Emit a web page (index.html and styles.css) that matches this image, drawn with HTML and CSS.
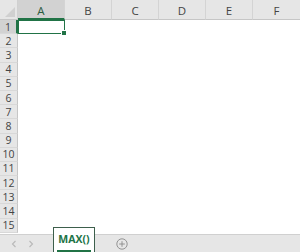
FILE: index.html
```html
<!DOCTYPE html>
<html lang="en">
<head>
    <meta charset="UTF-8">
    <title>Sheet</title>
    <link rel="stylesheet" href="styles.css">
</head>
<body>
    <div class="sheet">
        <div class="grid" id="grid">
            <div class="corner"><span class="tri"></span></div>
            <div class="colhead active">A</div>
            <div class="colhead">B</div>
            <div class="colhead">C</div>
            <div class="colhead">D</div>
            <div class="colhead">E</div>
            <div class="colhead last">F</div>
        </div>
        <div class="tabbar">
            <div class="nav">
                <svg width="6" height="8" viewBox="0 0 6 8"><path d="M4.5 1 L1.5 4 L4.5 7" fill="none" stroke="#b8b8b8" stroke-width="1.1"/></svg>
                <svg width="6" height="8" viewBox="0 0 6 8"><path d="M1.5 1 L4.5 4 L1.5 7" fill="none" stroke="#b8b8b8" stroke-width="1.1"/></svg>
            </div>
            <div class="tab">MAX()</div>
            <div class="add">
                <svg width="12" height="12" viewBox="0 0 12 12"><circle cx="6" cy="6" r="5.2" fill="none" stroke="#8a8a8a" stroke-width="0.9"/><path d="M6 3.2 V8.8 M3.2 6 H8.8" stroke="#8a8a8a" stroke-width="0.9"/></svg>
            </div>
        </div>
    </div>

    <script>
        const grid = document.getElementById('grid');
        for (let r = 1; r <= 15; r++) {
            const head = document.createElement('div');
            head.className = r === 1 ? 'rowhead active' : 'rowhead';
            head.textContent = r;
            grid.appendChild(head);
            for (let c = 0; c < 6; c++) {
                const cell = document.createElement('div');
                cell.className = (r === 1 && c === 0) ? 'cell selected' : 'cell';
                if (r === 1 && c === 0) {
                    const h = document.createElement('span');
                    h.className = 'handle';
                    cell.appendChild(h);
                }
                grid.appendChild(cell);
            }
        }
    </script>
</body>
</html>
```

FILE: styles.css
```css
body {
    margin: 0;
    background-color: #ffffff;
    font-family: "Open Sans", "Noto Sans", sans-serif;
}
.sheet {
    width: 300px;
    height: 252px;
    display: flex;
    flex-direction: column;
    overflow: hidden;
}
.grid {
    display: grid;
    grid-template-columns: 18px repeat(6, 47px);
    grid-template-rows: 20px repeat(15, 14.2px);
}
.corner {
    background-color: #e6e6e6;
    border-right: 1px solid #d0d0d0;
    border-bottom: 1px solid #c6c6c6;
    position: relative;
}
.tri {
    position: absolute;
    right: 2px;
    bottom: 2px;
    width: 0;
    height: 0;
    border-left: 10px solid transparent;
    border-bottom: 10px solid #d0d0d0;
}
.colhead {
    background-color: #e6e6e6;
    border-right: 1px solid #d4d4d4;
    border-bottom: 1px solid #c6c6c6;
    color: #444;
    font-size: 11.5px;
    display: flex;
    align-items: center;
    justify-content: center;
    padding-top: 2px;
    box-sizing: border-box;
}
.colhead.last {
    border-right: none;
}
.colhead.active {
    background-color: #d2d2d2;
    border-bottom: 2px solid #217346;
    color: #2b5c40;
}
.rowhead {
    background-color: #e6e6e6;
    border-right: 1px solid #c6c6c6;
    border-bottom: 1px solid #d8d8d8;
    color: #444;
    font-size: 10.5px;
    display: flex;
    align-items: center;
    justify-content: center;
    box-sizing: border-box;
}
.rowhead.active {
    background-color: #d2d2d2;
    border-right: 2px solid #217346;
}
.cell {
    background-color: #ffffff;
}
.cell.selected {
    border: 1.5px solid #217346;
    position: relative;
    box-sizing: border-box;
}
.handle {
    position: absolute;
    right: -3px;
    bottom: -3px;
    width: 4px;
    height: 4px;
    background-color: #217346;
    border: 1px solid #ffffff;
}
.tabbar {
    flex: 1;
    margin-top: 1px;
    background-color: #e6e6e6;
    border-top: 1px solid #d0d0d0;
    display: flex;
    align-items: flex-end;
}
.nav {
    width: 53px;
    display: flex;
    gap: 11px;
    padding-left: 11px;
    box-sizing: border-box;
    align-self: center;
}
.tab {
    width: 42px;
    height: 26px;
    margin-top: -8px;
    background-color: #ffffff;
    border: 1px solid #3d5f4c;
    border-bottom: none;
    box-sizing: border-box;
    color: #217346;
    font-size: 10.5px;
    font-weight: bold;
    display: flex;
    align-items: center;
    justify-content: center;
    padding-bottom: 2px;
    position: relative;
}
.tab::after {
    content: "";
    position: absolute;
    left: 3px;
    right: 3px;
    bottom: 0;
    height: 3px;
    background-color: #217346;
}
.add {
    margin-left: 21px;
    align-self: center;
    display: flex;
}
```
